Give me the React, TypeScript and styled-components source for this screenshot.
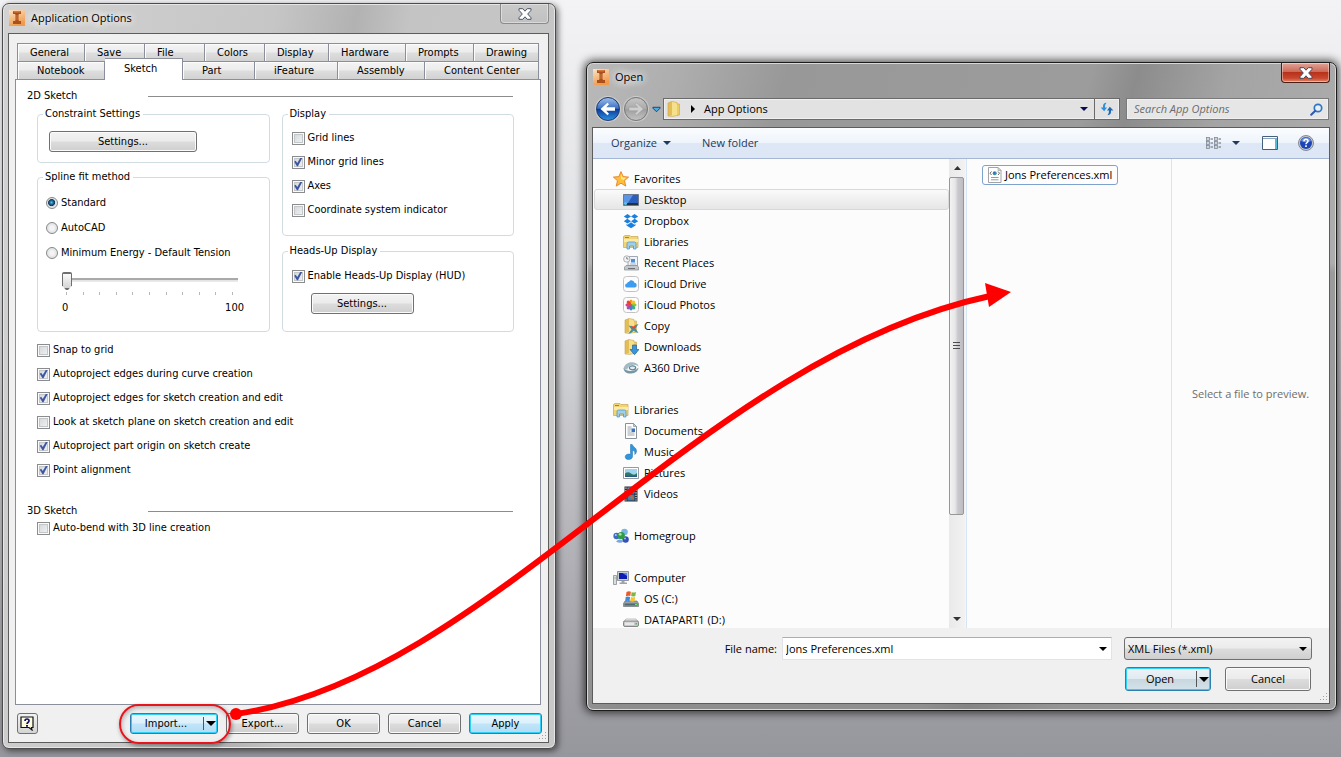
import React, { useState } from "react";
import styled, { createGlobalStyle, css } from "styled-components";

const tahoma = `"DejaVu Sans Condensed", "Liberation Sans", sans-serif`;
const segoe = `"Open Sans", "Noto Sans", sans-serif`;

const GlobalStyle = createGlobalStyle`
  *, *::before, *::after { box-sizing: border-box; }
  body { margin: 0; }
  button, input, select, legend { font: inherit; color: inherit; margin: 0; padding: 0; }
  svg { display: block; flex: none; }
`;

/* ---------- desktop and window frames ---------- */

const Desktop = styled.main`
  position: relative;
  display: grid;
  grid-template-columns: minmax(0, 554fr) minmax(0, 751fr);
  grid-template-rows: minmax(0, 1fr);
  gap: 30px;
  height: 100vh;
  min-height: 720px;
  padding: 3px 4px 8px 2px;
  background: linear-gradient(#f3f3f5 0%, #dcdde0 38%, #a3a3a9 85%, #96969d 100%);
`;

const OptionsWindow = styled.section`
  display: flex;
  flex-direction: column;
  padding: 0 6px 5px 5px;
  border: 1px solid #4c4c4c;
  border-radius: 7px;
  background: linear-gradient(100deg, #d2d2d2 0%, #c6c6c6 40%, #b2b2b2 52%, #c4c4c4 60%, #c8c8c8 100%);
  box-shadow: inset 0 0 0 1px #e6e6e6, 2px 2px 6px rgba(0, 0, 0, 0.55);
  color: #000;
  font: 11px/14px ${tahoma};
`;

const OpenWindow = styled.section`
  display: flex;
  flex-direction: column;
  margin: 59px 0 38px;
  padding: 0 6px 6px 5px;
  border: 1px solid #1c1c1c;
  border-radius: 7px;
  background:
    linear-gradient(transparent 200px, rgba(120, 120, 120, 0.35) 210px),
    linear-gradient(105deg, #b9b9b9 0%, #aeaeae 10%, #989898 22%, #9c9c9c 55%, #8c8c8c 60%, #a4a4a4 70%, #b4b4b4 100%);
  box-shadow: inset 0 0 0 1px #d8d8d8, 0 0 9px 2px rgba(0, 0, 0, 0.65);
  color: #000;
  font: 11px/16px ${segoe};
`;

const TitleBar = styled.header`
  display: flex;
  align-items: flex-start;
  gap: 6px;
  height: 29px;
  padding-left: 1px;
`;

const TitleIcon = styled.span`
  margin-top: 6px;
`;

const Title = styled.h1`
  flex: 1;
  margin: 6px 0 0;
  font: 11px/16px ${segoe};
  text-shadow: 0 0 8px #fff, 0 0 8px #fff, 0 0 12px #fff;
`;

const CloseButton = styled.button<{ $active?: boolean }>`
  display: grid;
  place-items: center;
  width: 49px;
  height: 20px;
  border: 1px solid #8b8b8b;
  border-top: 0;
  border-radius: 0 0 4px 4px;
  background: linear-gradient(#cacaca, #c0c0c0);
  box-shadow: inset 0 0 0 1px rgba(255, 255, 255, 0.4);
  ${(p) =>
    p.$active &&
    css`
      border-color: #4a1d16;
      background: linear-gradient(#e0a598 0%, #cf6a57 45%, #b8311b 50%, #c9482f 80%, #e08a6a 100%);
    `}
`;

const ClientArea = styled.div`
  position: relative;
  display: flex;
  flex: 1;
  flex-direction: column;
  min-height: 0;
  border: 1px solid #5c5c5c;
  background: #f0f0f0;
`;

const SizeGrip = styled.svg`
  position: absolute;
  right: 1px;
  bottom: 1px;
`;

/* ---------- buttons ---------- */

const PushButton = styled.button<{ $width?: number; $highlight?: boolean }>`
  display: flex;
  align-items: center;
  justify-content: center;
  width: ${(p) => p.$width ?? 73}px;
  height: 21px;
  border: 1px solid #707070;
  border-radius: 3px;
  background: linear-gradient(#f3f3f3 0%, #ebebeb 48%, #dcdcdc 52%, #cfcfcf 100%);
  box-shadow: inset 0 0 0 1px #fbfbfb;
  ${(p) =>
    p.$highlight &&
    css`
      border-color: #2c7fae;
      background: linear-gradient(#eaf6fd 0%, #dcf1fc 48%, #c2e5f8 52%, #b0dcf5 100%);
      box-shadow: inset 0 0 0 1px #2fd0f8;
    `}
`;

const SplitButton = styled.div<{ $width: number; $tall?: boolean }>`
  display: flex;
  align-items: stretch;
  width: ${(p) => p.$width}px;
  height: ${(p) => (p.$tall ? 24 : 21)}px;
  border: 1px solid #2c7fae;
  border-radius: 3px;
  background: ${(p) =>
    p.$tall
      ? "linear-gradient(#eef4f8 0%, #e0eaf0 48%, #c8d6df 52%, #d4e2ea 100%)"
      : "linear-gradient(#eaf6fd 0%, #dcf1fc 48%, #c2e5f8 52%, #b0dcf5 100%)"};
  box-shadow: inset 0 0 0 1px #2fd0f8;
`;

const SplitMain = styled.button`
  flex: 1;
  padding-right: 2px;
  border: 0;
  background: none;
`;

const SplitArrow = styled.button`
  display: grid;
  place-items: center;
  width: 14px;
  margin: 3px 0;
  border: 0;
  border-left: 1px solid #555;
  background: none;
`;

/* ---------- tabs ---------- */

const TabStrip = styled.nav`
  padding: 9px 9px 0 8px;
`;

const TabRow = styled.div<{ $columns: string }>`
  display: grid;
  grid-template-columns: ${(p) => p.$columns};
  height: 18px;
  border-left: 1px solid #8b8f9b;
`;

const Tab = styled.button<{ $indent: number; $selected?: boolean }>`
  height: 18px;
  padding: 0 0 0 ${(p) => p.$indent}px;
  border: solid #8b8f9b;
  border-width: 1px 1px 0 0;
  background: linear-gradient(#f4f4f4 0%, #ececec 48%, #dedede 52%, #d2d2d2 100%);
  box-shadow: inset 1px 1px 0 #fcfcfc;
  text-align: left;
  white-space: nowrap;
  ${(p) =>
    p.$selected &&
    css`
      position: relative;
      height: 22px;
      margin: -3px 0 -1px;
      padding-bottom: 2px;
      background: #fff;
      box-shadow: none;
    `}
`;

const TabPage = styled.div`
  flex: 1;
  min-height: 0;
  margin: 0 7px 0 6px;
  padding: 9px 26px 0 11px;
  border: 1px solid #8b8f9b;
  background: #fff;
`;

const SectionTitle = styled.h2`
  display: grid;
  grid-template-columns: 113px 1fr;
  align-items: center;
  gap: 8px;
  margin: 0 1px 0 0;
  font: inherit;
  &::after {
    content: "";
    height: 1px;
    background: #8c8c8c;
  }
`;

/* ---------- group boxes and controls ---------- */

const Columns = styled.div`
  display: grid;
  grid-template-columns: 1fr 1fr;
  gap: 12px;
  margin: 4px 0 0 10px;
`;

const Column = styled.div<{ $gap: number }>`
  display: flex;
  flex-direction: column;
  gap: ${(p) => p.$gap}px;
`;

const Group = styled.fieldset<{ $top: number; $bottom: number; $indent: number; $fill?: boolean }>`
  min-width: 0;
  margin: 0;
  padding: ${(p) => `${p.$top}px ${p.$indent}px ${p.$bottom}px`};
  border: 1px solid #d0dce2;
  border-radius: 4px;
  ${(p) => p.$fill && "flex: 1;"}
  > legend {
    margin-left: ${(p) => 5 - p.$indent}px;
  }
`;

const Legend = styled.legend`
  padding: 0 3px 0 2px;
`;

const Option = styled.label<{ $height?: number }>`
  display: flex;
  align-items: center;
  gap: 3px;
  height: ${(p) => p.$height ?? 24}px;
  white-space: nowrap;
`;

const CheckBox = styled.input.attrs({ type: "checkbox" })`
  appearance: none;
  position: relative;
  flex: none;
  width: 13px;
  height: 13px;
  border: 1px solid #8a8c8e;
  background: linear-gradient(135deg, #cfd2d6, #f6f6f6);
  box-shadow: inset 0 0 0 1px #fafafa, inset 0 0 0 2px #c4c7ca;
  &:checked::after {
    content: "";
    position: absolute;
    inset: 1px;
    background: #3d57a2;
    clip-path: polygon(8% 48%, 24% 36%, 42% 60%, 78% 0, 98% 4%, 50% 98%, 38% 98%);
  }
`;

const Radio = styled.input.attrs({ type: "radio" })`
  appearance: none;
  flex: none;
  width: 12px;
  height: 12px;
  border: 1px solid #85888b;
  border-radius: 50%;
  background: radial-gradient(circle, #f4f4f4 30%, #c6cace 100%);
  box-shadow: inset 0 0 0 1px #e8e8e8;
  &:checked {
    background: radial-gradient(circle at 45% 45%, #5fc0ec 0, #1a6f9f 22%, #0d3554 42%, #d5dade 50%, #f2f2f2 100%);
  }
`;

const SliderBlock = styled.div`
  width: 177px;
  margin: 7px 0 0 15px;
`;

const Slider = styled.input.attrs({ type: "range" })`
  appearance: none;
  display: block;
  width: 100%;
  height: 19px;
  background: none;
  &::-webkit-slider-runnable-track {
    height: 4px;
    margin: 0 0 3px 1px;
    border-top: 2px solid #a8aaaa;
    border-bottom: 1px solid #eaeaea;
    background: #e4e4e4;
  }
  &::-webkit-slider-thumb {
    appearance: none;
    width: 10px;
    height: 18px;
    margin-top: -8px;
    border-radius: 2px;
    background: linear-gradient(#fafafa, #d4d4d4) center / 8px 14px no-repeat, #6c6e70;
    clip-path: polygon(0 0, 100% 0, 100% 75%, 60% 100%, 40% 100%, 0 75%);
  }
`;

const Ticks = styled.div`
  display: flex;
  justify-content: space-between;
  margin: 1px 5px 0;
`;

const Tick = styled.i`
  width: 1px;
  height: 3px;
  background: #b4b8b8;
`;

const SliderScale = styled.div`
  display: flex;
  justify-content: space-between;
  margin: 6px -6px 0 1px;
`;

const OptionList = styled.div`
  display: flex;
  flex-direction: column;
  margin: 6px 0 0 10px;
`;

const HudButton = styled(PushButton)`
  margin: 5px 0 0 19px;
`;

const LowerSection = styled.div`
  margin-top: 22px;
`;

const BendOption = styled.div`
  margin: -2px 0 0 10px;
`;

const Footer = styled.footer`
  display: flex;
  align-items: center;
  gap: 8px;
  height: 37px;
  padding: 0 6px 0 8px;
`;

const HelpButton = styled.button`
  display: grid;
  place-items: center;
  width: 21px;
  height: 21px;
  margin-right: auto;
  border: 1px solid #707070;
  border-radius: 3px;
  background: linear-gradient(#f3f3f3, #d4d4d4);
`;

const ImportHolder = styled.div`
  position: relative;
`;

const Callout = styled.span`
  position: absolute;
  inset: -9px -13px -10px -11px;
  border: 2px solid #e8141c;
  border-radius: 20px;
  box-shadow: 1px 2px 4px rgba(0, 0, 0, 0.4), inset 1px 2px 4px rgba(0, 0, 0, 0.25);
  pointer-events: none;
`;

/* ---------- open dialog ---------- */

const AddressRow = styled.div`
  display: grid;
  grid-template-columns: auto minmax(0, 451fr) minmax(0, 202fr);
  align-items: center;
  gap: 6px;
  height: 35px;
  padding: 0 1px 1px 4px;
`;

const NavButtons = styled.div`
  display: flex;
  align-items: center;
  gap: 4px;
`;

const NavButton = styled.button<{ $forward?: boolean }>`
  display: grid;
  place-items: center;
  width: 24px;
  height: 24px;
  border: 1px solid ${(p) => (p.$forward ? "#777" : "#1a3a72")};
  border-radius: 50%;
  background: ${(p) =>
    p.$forward
      ? "linear-gradient(#c6c6c6, #a9a9a9 50%, #9e9e9e 52%, #c2c2c2)"
      : "linear-gradient(#9dbce8 0%, #3d72c4 46%, #0b3c9c 52%, #2c8fe0 100%)"};
  box-shadow: 0 0 0 1px rgba(255, 255, 255, 0.35);
`;

const PlainButton = styled.button`
  display: grid;
  place-items: center;
  border: 0;
  background: none;
`;

const AddressBar = styled.div`
  display: flex;
  align-items: stretch;
  height: 22px;
  margin-left: -4px;
  border: 1px solid #6a6a6a;
  background: #e2e2e2;
  box-shadow: inset 0 0 0 1px #f0f0f0;
`;

const Crumb = styled.div`
  display: flex;
  flex: 1;
  align-items: center;
  gap: 9px;
  padding-left: 2px;
`;

const AddressButton = styled.button<{ $divided?: boolean }>`
  display: grid;
  place-items: center;
  width: ${(p) => (p.$divided ? 25 : 20)}px;
  border: 0;
  ${(p) => p.$divided && "border-left: 1px solid #6a6a6a;"}
  background: none;
`;

const SearchBox = styled.label`
  display: flex;
  align-items: center;
  height: 22px;
  padding: 0 5px 0 7px;
  border: 1px solid #7a7a7a;
  background: #e6e6e6;
  box-shadow: inset 0 0 0 1px #f0f0f0;
`;

const SearchInput = styled.input`
  flex: 1;
  min-width: 0;
  border: 0;
  background: none;
  font-style: italic;
  &::placeholder {
    color: #6c6c6c;
    opacity: 1;
  }
`;

const CommandBar = styled.div`
  display: flex;
  align-items: center;
  height: 31px;
  padding: 0 15px 0 18px;
  border-bottom: 1px solid #a5b7d4;
  background: linear-gradient(#fbfdff 0%, #eef4fb 48%, #dde7f5 52%, #dce6f4 100%);
  color: #1e395b;
`;

const Command = styled.button<{ $after?: number }>`
  display: flex;
  align-items: center;
  gap: 6px;
  margin-right: ${(p) => p.$after ?? 0}px;
  border: 0;
  background: none;
`;

const ViewCaret = styled.span`
  margin-left: 4px;
`;

const Spacer = styled.span`
  flex: 1;
`;

const Browser = styled.div`
  display: grid;
  flex: 1;
  grid-template-columns: minmax(0, 356fr) 17px minmax(0, 205fr) minmax(0, 158fr);
  grid-template-rows: minmax(0, 1fr);
  min-height: 0;
  background: #fcfcfc;
`;

const Tree = styled.ul`
  margin: 0;
  padding: 9px 0 0 1px;
  overflow: hidden;
  list-style: none;
`;

const TreeItem = styled.li<{ $level: number; $selected?: boolean; $first?: boolean }>`
  display: flex;
  align-items: center;
  gap: 5px;
  height: 21px;
  padding-left: ${(p) => (p.$level ? 28 : 18)}px;
  margin-top: ${(p) => (p.$first ? 21 : 0)}px;
  border: 1px solid transparent;
  border-radius: 3px;
  white-space: nowrap;
  ${(p) =>
    p.$selected &&
    css`
      border-color: #d9d9d9;
      background: linear-gradient(#fafafa, #e6e6e6);
    `}
`;

const ScrollBar = styled.div`
  display: flex;
  flex-direction: column;
  border-right: 1px solid #f6f6f6;
  background: linear-gradient(90deg, #e9e9e9, #f2f2f2);
`;

const ScrollArrow = styled.button`
  display: grid;
  place-items: center;
  height: 18px;
  border: 0;
  background: none;
`;

const ScrollTrack = styled.div`
  flex: 1;
`;

const ScrollThumb = styled.div`
  display: grid;
  place-items: center;
  height: 78%;
  margin: 0 1px 0 0;
  border: 1px solid #979797;
  border-radius: 2px;
  background: linear-gradient(90deg, #f3f3f3 0%, #e6e6e8 40%, #c9c9cd 60%, #bcbcc2 100%);
`;

const FileList = styled.div`
  padding: 6px 0 0 15px;
  border-left: 1px solid #d6e5f5;
`;

const FileItem = styled.button`
  display: flex;
  align-items: center;
  gap: 2px;
  height: 20px;
  padding: 0 5px 0 4px;
  border: 1px solid #7da2ce;
  border-radius: 3px;
  background: #fdfdfd;
  white-space: nowrap;
`;

const Preview = styled.div`
  display: grid;
  place-items: center;
  border-left: 1px solid #d6e5f5;
  color: #6d6d6d;
  white-space: nowrap;
`;

const FileForm = styled.div`
  display: grid;
  grid-template-columns: 1fr 188px;
  gap: 7px 12px;
  padding: 9px 17px 12px 0;
`;

const FileNameField = styled.label`
  display: grid;
  grid-template-columns: 184fr 330fr;
  align-items: center;
  gap: 5px;
  text-align: right;
`;

const Combo = styled.span`
  display: flex;
  height: 23px;
  padding: 0 4px 0 3px;
  border: 1px solid #e2e3ea;
  border-top-color: #abadb3;
  background: #fff;
`;

const ComboInput = styled.input`
  flex: 1;
  min-width: 0;
  border: 0;
  background: none;
`;

const SelectBox = styled.span`
  position: relative;
  display: block;
`;

const Select = styled.select`
  appearance: none;
  width: 100%;
  height: 23px;
  padding-left: 3px;
  border: 1px solid #707070;
  border-radius: 3px;
  background: linear-gradient(#f3f3f3 0%, #ebebeb 48%, #dcdcdc 52%, #cfcfcf 100%);
`;

const SelectCaret = styled.span`
  position: absolute;
  top: 10px;
  right: 5px;
  pointer-events: none;
`;

const Actions = styled.div`
  display: flex;
  grid-column: 2;
  gap: 14px;
  padding-left: 1px;
`;

const CancelButton = styled(PushButton)`
  height: 24px;
`;

const Arrow = styled.svg`
  position: absolute;
  inset: 0;
  width: 100%;
  height: 100%;
  pointer-events: none;
`;

/* ---------- glyphs ---------- */

const Caret = ({ w = 8, color = "#000" }: { w?: number; color?: string }) => (
  <svg width={w} height={w / 2} viewBox="0 0 8 4" aria-hidden="true">
    <path d="M0 0h8L4 4z" fill={color} />
  </svg>
);

const AppIcon = () => (
  <svg width="16" height="16" viewBox="0 0 16 16" aria-hidden="true">
    <defs>
      <linearGradient id="app" x1="0" y1="0" x2="0.4" y2="1">
        <stop offset="0" stopColor="#fbe3c8" />
        <stop offset="1" stopColor="#f09a4a" />
      </linearGradient>
    </defs>
    <path d="M0 0h16v16H0z" fill="url(#app)" />
    <path d="M4 1h8v3h-2l-.5 1v5l.5 1h2v3H4v-3h2l.5-1V5L6 4H4z" fill="#a9501c" />
    <path d="M4 1h8l-1 1.500H5zM7.500 5h1v5h-1z" fill="#d27a3c" />
  </svg>
);

const CloseGlyph = ({ stroke }: { stroke: string }) => (
  <svg width="14" height="12" viewBox="0 0 14 12" aria-hidden="true">
    <path
      d="M1 .7h3.800L7 3.200 9.200.7H13v1.600L9.700 6 13 9.700v1.600H9.200L7 8.800l-2.200 2.500H1V9.700L4.300 6 1 2.300z"
      fill="#fff"
      stroke={stroke}
      strokeWidth="1"
      strokeLinejoin="round"
    />
  </svg>
);

const Grip = () => (
  <SizeGrip width="9" height="9" viewBox="0 0 9 9" aria-hidden="true">
    <path d="M7 0h1v1H7zM4 3h1v1H4zM7 3h1v1H7zM1 6h1v1H1zM4 6h1v1H4zM7 6h1v1H7z" fill="#a2a2a2" />
  </SizeGrip>
);

const Folder = () => (
  <>
    <path d="M2 2l4-1.500v14L2 15z" fill="#e3bd58" />
    <path d="M6 .5l5 1v13l-5 1z" fill="#f6e08c" />
    <path d="M11 3h2.500v11L11 15z" fill="#eccb66" />
    <path d="M2 2l4-1.500 5 1V3h2.500v11L6 15.500 2 15z" fill="none" stroke="#cda548" strokeWidth=".6" />
  </>
);

const glyphs: Record<string, React.ReactNode> = {
  star: (
    <>
      <path d="M8 .6l2.200 5 5.400.5-4.100 3.600 1.300 5.400L8 12.200l-4.800 2.900 1.300-5.400L.4 6.100l5.400-.5z" fill="#fdbf3a" stroke="#e5802a" strokeWidth=".9" />
      <path d="M8 2.800l1.500 3.600 3.500.4-2.700 2.300L8 8z" fill="#ffe88a" />
    </>
  ),
  desktop: (
    <>
      <path d="M.5 2.500h15v11H.5z" fill="#2a5fc0" stroke="#6c7a90" />
      <path d="M1 3h9L5 11H1z" fill="#5c94e6" />
      <path d="M1 11h14v2H1z" fill="#26303c" />
      <circle cx="2.500" cy="11.500" r="1.600" fill="#58c2ec" />
    </>
  ),
  dropbox: (
    <path
      d="M4.500 1L8 3.400 4.300 5.800.8 3.400zM11.500 1l3.700 2.400-3.500 2.400L8 3.400zM.8 8.200l3.500-2.400L8 8.200l-3.500 2.400zM11.700 5.800l3.500 2.400-3.700 2.400L8 8.200zM3.500 11l1.100.7L8 9.300l3.400 2.400 1.100-.7v1.500L8 15.200l-4.500-2.700z"
      fill="#1a7fe0"
    />
  ),
  libraries: (
    <>
      <path d="M.5 2.500L2 1.500h5l1 1h7v11H.5z" fill="#f0d476" stroke="#caa64c" strokeWidth=".7" />
      <path d="M2 3.500h4" stroke="#58a83c" />
      <path d="M1 5h14v3H1z" fill="#faeaa8" />
      <path d="M4 15V9.500Q4 8 5.500 8h6Q13 8 13 9.500V15h-2.500v-3h-4v3z" fill="#9ed0ee" stroke="#4c8fc0" strokeWidth=".7" />
    </>
  ),
  recent: (
    <>
      <path d="M5 1.500h9.500v9.500H5z" fill="#eef4fa" stroke="#8a949e" strokeWidth=".8" />
      <path d="M8 4h4v3.500H8z" fill="#4f8fd4" />
      <path d="M7 9h6" stroke="#9aa6b2" strokeWidth=".8" />
      <path d="M1.500 12l1.500-1.500h11l1.500 1.500v3h-14z" fill="#c3c8cc" stroke="#858a8e" strokeWidth=".7" />
      <path d="M5 13.500h7" stroke="#6a6f73" />
      <circle cx="3.800" cy="4" r="3.200" fill="#f2f4f5" stroke="#9aa0a4" strokeWidth=".8" />
      <path d="M3.800 2v2h1.600" fill="none" stroke="#555" strokeWidth=".7" />
    </>
  ),
  cloud: (
    <>
      <rect x=".5" y=".5" width="15" height="15" rx="3" fill="#fdfdfd" stroke="#c2c2c6" />
      <path d="M4.300 11.500a2 2 0 01-.3-4 2 2 0 012-1.700 3 3 0 015.500 1 2.400 2.400 0 01.5 4.700z" fill="#3d9cf0" />
    </>
  ),
  photos: (
    <>
      <rect x=".5" y=".5" width="15" height="15" rx="3" fill="#fdfdfd" stroke="#c2c2c6" />
      {["#f59a1c", "#f2c81c", "#8cc63c", "#3cb07c", "#4a84d0", "#9058b8", "#d8408c", "#ec4430"].map((c, i) => (
        <ellipse key={c} cx="8" cy="4.900" rx="1.700" ry="2.500" fill={c} transform={`rotate(${i * 45} 8 8)`} />
      ))}
      <circle cx="8" cy="8" r="1" fill="#c83c30" />
    </>
  ),
  copy: (
    <>
      <Folder />
      <path d="M5.500 7.500q3.500 0 5 2.500Q12 6.500 15.500 6l-3 4.500 3 4.500q-3-.5-4.500-2.500Q9 15 5.500 15.500l3-4z" fill="#3f8fa8" />
      <path d="M7.500 7.500l3 1 2.500-2-1.500 4h-2z" fill="#e8492c" />
    </>
  ),
  downloads: (
    <>
      <Folder />
      <path d="M9.500 6h4v4.500H16L11.500 15.700 7 10.500h2.500z" fill="#3a96dc" stroke="#1d69ac" strokeWidth=".7" />
    </>
  ),
  a360: (
    <>
      <path d="M.5 9C1 4.500 5.500 2 9.500 2.300c3.500.2 6 2.200 6 4.500-1-1.300-3-2.200-5.500-2-3 .2-5.500 2.200-5.500 4.700z" fill="#a3b9c3" />
      <path d="M.5 8.500c.5 3.500 3.500 5.500 8 5 4-.4 6.700-2.500 7-6-1.500 1.500-3 2.700-5.500 3.200C6 11.500 3.500 10.500.5 8.500z" fill="#7896a4" />
      <ellipse cx="9.500" cy="7.800" rx="3.200" ry="2" fill="#e4edf1" stroke="#5d8494" strokeWidth="1.200" />
    </>
  ),
  documents: (
    <>
      <path d="M2.500.5h8l3 3v12h-11z" fill="#fff" stroke="#7c8590" strokeWidth=".9" />
      <path d="M10.500.5v3h3z" fill="#ccd4dc" stroke="#7c8590" strokeWidth=".6" />
      <path d="M4.500 4h4M4.500 6h4M4.500 8h3M4.500 10h7M4.500 12h7" stroke="#8a97a6" strokeWidth=".9" />
      <path d="M8.500 5.500H12V9H8.500z" fill="#3a72c0" />
    </>
  ),
  music: (
    <path
      d="M7.500.5h1.700c.5 2.500 4.300 3 4.300 6.500 0 1.500-.7 2.600-1.700 3.500.6-2.500-.8-3.700-2.300-4.200v6.200c0 1.800-1.700 3-3.800 3-2 0-3.500-1-3.500-2.600s1.600-2.800 3.500-2.800c.7 0 1.300.1 1.800.4z"
      fill="#2f97dc"
      stroke="#1c6cae"
      strokeWidth=".5"
    />
  ),
  pictures: (
    <>
      <path d="M.5 2.500h15v11H.5z" fill="#fff" stroke="#8a9096" strokeWidth=".9" />
      <path d="M2 4h12v8H2z" fill="#9fd4f0" />
      <path d="M2 8.500q3-2.500 6 0t6-.5v4H2z" fill="#2f7a62" />
      <path d="M2 10.500h12V12H2z" fill="#2a5a8c" />
    </>
  ),
  videos: (
    <>
      <path d="M1.500.5h13v15h-13z" fill="#2a2e34" />
      <path d="M4.500 1.500h7v6h-7z" fill="#5aa6d4" />
      <path d="M4.500 8.500h7v6h-7z" fill="#3c80b4" />
      <path d="M6 5l4-2v3zM6 12l3-3 2 4z" fill="#c06a38" />
      <path d="M3 1.500v13M13 1.500v13" stroke="#e4e8ea" strokeWidth="1.200" strokeDasharray="1.200 1.200" />
    </>
  ),
  homegroup: (
    <>
      <circle cx="3.600" cy="8" r="3.200" fill="#3c6cc4" />
      <circle cx="11.500" cy="4" r="3.300" fill="#7db4e4" />
      <circle cx="12.600" cy="11.500" r="3.200" fill="#3450b4" />
      <path d="M3 13.500q3.500-4 7.500 0-3.500 2.500-7.500 0z" fill="#7aa4e4" />
      <circle cx="8.200" cy="7.600" r="3.700" fill="#2f9c48" />
      <circle cx="7.200" cy="6.300" r="1.400" fill="#a8e0a8" />
      <circle cx="2.800" cy="6.900" r="1" fill="#b4cef4" />
      <circle cx="12" cy="10.400" r="1" fill="#a4b8f4" />
    </>
  ),
  computer: (
    <>
      <path d="M4.500 1.500h11v9h-11z" fill="#c8ccd0" stroke="#7c8286" strokeWidth=".8" />
      <path d="M6 3h8v6H6z" fill="#0c1cb4" />
      <path d="M9.500 3H14v3z" fill="#5c84f0" />
      <path d="M8.500 11h3v1.500H14V14H6.500v-1.500h2z" fill="#a0a4a8" />
      <path d="M.5 5.500h3v9h-3z" fill="#dadde0" stroke="#8a8e92" strokeWidth=".8" />
      <path d="M1.500 7.500h1v1h-1z" fill="#3cb43c" />
    </>
  ),
  os: (
    <>
      <path d="M2 10h12l1.500 2.500v3H.5v-3z" fill="#9aa0a6" stroke="#5e6468" strokeWidth=".6" />
      <path d="M1.500 12.500h13v2h-13z" fill="#4c6a70" />
      <path d="M12 13h2v1h-2z" fill="#5cf05c" />
      <path d="M3.500 1Q5.700-.2 7.900.8L7.300 5Q5 4.200 2.900 5.200z" fill="#ea5b2c" />
      <path d="M8.700 1q2.200 1 4.300 0L12.300 5q-2.100 1-4.200.1z" fill="#7cb83c" />
      <path d="M2.700 6q2.200-1 4.400 0l-.6 4.200q-2.200-.8-4.300.1z" fill="#3f8ad8" />
      <path d="M7.900 6q2.100.9 4.300 0l-.7 4.200q-2.200.9-4.200 0z" fill="#f8c42c" />
    </>
  ),
  drive: (
    <>
      <path d="M3 7h10l2.500 3H.5z" fill="#f0f0f0" stroke="#9a9a9a" strokeWidth=".6" />
      <rect x=".5" y="9" width="15" height="5.500" rx="1.500" fill="#c8c8c8" stroke="#6e6e6e" strokeWidth=".8" />
      <path d="M2 10.500h9v2.500H2z" fill="#e8e8e8" />
      <path d="M12.500 11h1.500v1.500h-1.500z" fill="#3cc83c" />
    </>
  ),
  folder: <Folder />,
  xml: (
    <>
      <path d="M1.500.5h9.500l3 3v12H1.500z" fill="#fff" stroke="#9a9a9a" strokeWidth=".9" />
      <path d="M11 .5v3h3z" fill="#dcdcdc" stroke="#9a9a9a" strokeWidth=".6" />
      <path d="M4.500 4.500L3 6.200 4.500 8M11 4.500l1.500 1.700L11 8" fill="none" stroke="#555" strokeWidth=".9" />
      <circle cx="7.700" cy="6.200" r="2" fill="#2f9a9c" />
      <circle cx="7.200" cy="5.800" r=".8" fill="#2c5cc4" />
      <path d="M4 10.500h7.500M4 12.800h7.500" stroke="#8c8ca0" strokeWidth=".9" />
    </>
  ),
};

const Glyph = ({ name }: { name: string }) => (
  <svg width="16" height="16" viewBox="0 0 16 16" aria-hidden="true">
    {glyphs[name]}
  </svg>
);

/* ---------- data ---------- */

const tabColumns = (tabs: [string, number][]) => tabs.map(([, size]) => `minmax(0, ${size}fr)`).join(" ");

const firstTabs: [string, number][] = [
  ["General", 67], ["Save", 60], ["File", 60], ["Colors", 60], ["Display", 64], ["Hardware", 77], ["Prompts", 68], ["Drawing", 65],
];
const secondTabs: [string, number][] = [
  ["Notebook", 87], ["Sketch", 78], ["Part", 72], ["iFeature", 83], ["Assembly", 87], ["Content Center", 114],
];
const displayOptions: [string, boolean][] = [
  ["Grid lines", false], ["Minor grid lines", true], ["Axes", true], ["Coordinate system indicator", false],
];
const sketchOptions: [string, boolean][] = [
  ["Snap to grid", false],
  ["Autoproject edges during curve creation", true],
  ["Autoproject edges for sketch creation and edit", true],
  ["Look at sketch plane on sketch creation and edit", false],
  ["Autoproject part origin on sketch create", true],
  ["Point alignment", true],
];
const fitMethods = ["Standard", "AutoCAD", "Minimum Energy - Default Tension"];
const places: { label: string; icon: string; level: number; first?: boolean }[] = [
  { label: "Favorites", icon: "star", level: 0 },
  { label: "Desktop", icon: "desktop", level: 1 },
  { label: "Dropbox", icon: "dropbox", level: 1 },
  { label: "Libraries", icon: "libraries", level: 1 },
  { label: "Recent Places", icon: "recent", level: 1 },
  { label: "iCloud Drive", icon: "cloud", level: 1 },
  { label: "iCloud Photos", icon: "photos", level: 1 },
  { label: "Copy", icon: "copy", level: 1 },
  { label: "Downloads", icon: "downloads", level: 1 },
  { label: "A360 Drive", icon: "a360", level: 1 },
  { label: "Libraries", icon: "libraries", level: 0, first: true },
  { label: "Documents", icon: "documents", level: 1 },
  { label: "Music", icon: "music", level: 1 },
  { label: "Pictures", icon: "pictures", level: 1 },
  { label: "Videos", icon: "videos", level: 1 },
  { label: "Homegroup", icon: "homegroup", level: 0, first: true },
  { label: "Computer", icon: "computer", level: 0, first: true },
  { label: "OS (C:)", icon: "os", level: 1 },
  { label: "DATAPART1 (D:)", icon: "drive", level: 1 },
];

const Check = ({ label, on }: { label: string; on: boolean }) => (
  <Option>
    <CheckBox defaultChecked={on} />
    {label}
  </Option>
);

/* ---------- windows ---------- */

function ApplicationOptions() {
  const [tension, setTension] = useState(0);
  return (
    <OptionsWindow aria-label="Application Options">
      <TitleBar>
        <TitleIcon><AppIcon /></TitleIcon>
        <Title>Application Options</Title>
        <CloseButton aria-label="Close"><CloseGlyph stroke="#4c5468" /></CloseButton>
      </TitleBar>
      <ClientArea>
        <TabStrip>
          <TabRow $columns={tabColumns(firstTabs)}>
            {firstTabs.map(([label]) => (
              <Tab key={label} $indent={12}>{label}</Tab>
            ))}
          </TabRow>
          <TabRow $columns={tabColumns(secondTabs)}>
            {secondTabs.map(([label]) => (
              <Tab key={label} $indent={19} $selected={label === "Sketch"}>{label}</Tab>
            ))}
          </TabRow>
        </TabStrip>
        <TabPage>
          <SectionTitle>2D Sketch</SectionTitle>
          <Columns>
            <Column $gap={7}>
              <Group $top={10} $bottom={10} $indent={11}>
                <Legend>Constraint Settings</Legend>
                <PushButton $width={148}>Settings...</PushButton>
              </Group>
              <Group $top={6} $bottom={0} $indent={8} $fill>
                <Legend>Spline fit method</Legend>
                {fitMethods.map((label, i) => (
                  <Option key={label} $height={25}>
                    <Radio name="fit" defaultChecked={i === 0} />
                    {label}
                  </Option>
                ))}
                <SliderBlock>
                  <Slider aria-label="Tension" min={0} max={100} value={tension} onChange={(e) => setTension(Number(e.target.value))} />
                  <Ticks>{Array.from({ length: 11 }, (_, i) => <Tick key={i} />)}</Ticks>
                  <SliderScale><span>0</span><span>100</span></SliderScale>
                </SliderBlock>
              </Group>
            </Column>
            <Column $gap={8}>
              <Group $top={5} $bottom={13} $indent={9}>
                <Legend>Display</Legend>
                {displayOptions.map(([label, on]) => <Check key={label} label={label} on={on} />)}
              </Group>
              <Group $top={6} $bottom={17} $indent={9} $fill>
                <Legend>Heads-Up Display</Legend>
                <Check label="Enable Heads-Up Display (HUD)" on />
                <HudButton $width={103}>Settings...</HudButton>
              </Group>
            </Column>
          </Columns>
          <OptionList>
            {sketchOptions.map(([label, on]) => <Check key={label} label={label} on={on} />)}
          </OptionList>
          <LowerSection>
            <SectionTitle>3D Sketch</SectionTitle>
            <BendOption><Check label="Auto-bend with 3D line creation" on={false} /></BendOption>
          </LowerSection>
        </TabPage>
        <Footer>
          <HelpButton aria-label="Help">
            <svg width="15" height="15" viewBox="0 0 15 15" aria-hidden="true">
              <path d="M1 1h12v10.500h-1.500L12 14l-3-2.500H1z" fill="#fffde0" stroke="#111" strokeWidth="1.200" />
              <path d="M5 5q0-2 2-2t2 1.800q0 1-1 1.700T7 8" fill="none" stroke="#14146e" strokeWidth="1.700" />
              <path d="M6 9h2v1.700H6z" fill="#14146e" />
            </svg>
          </HelpButton>
          <ImportHolder>
            <SplitButton $width={88}>
              <SplitMain>Import...</SplitMain>
              <SplitArrow aria-label="More import choices"><Caret w={10} /></SplitArrow>
            </SplitButton>
            <Callout />
          </ImportHolder>
          <PushButton>Export...</PushButton>
          <PushButton>OK</PushButton>
          <PushButton>Cancel</PushButton>
          <PushButton $highlight>Apply</PushButton>
        </Footer>
        <Grip />
      </ClientArea>
    </OptionsWindow>
  );
}

function OpenDialog() {
  return (
    <OpenWindow aria-label="Open">
      <TitleBar>
        <TitleIcon><AppIcon /></TitleIcon>
        <Title>Open</Title>
        <CloseButton $active aria-label="Close"><CloseGlyph stroke="#4a4a5c" /></CloseButton>
      </TitleBar>
      <AddressRow>
        <NavButtons>
          <NavButton aria-label="Back">
            <svg width="16" height="14" viewBox="0 0 16 14" aria-hidden="true">
              <path d="M.5 7L7.500.8 9 2.300 6.200 5.300H15v3.400H6.200L9 11.700l-1.500 1.500z" fill="#fff" />
            </svg>
          </NavButton>
          <NavButton $forward aria-label="Forward">
            <svg width="16" height="14" viewBox="0 0 16 14" aria-hidden="true">
              <path d="M15.500 7L8.500.8 7 2.300l2.800 3H1v3.400h8.800L7 11.700l1.500 1.500z" fill="#cfcfcf" stroke="#9a9a9a" strokeWidth=".5" />
            </svg>
          </NavButton>
          <PlainButton aria-label="Recent pages">
            <svg width="9" height="7" viewBox="0 0 10 7" aria-hidden="true">
              <path d="M1 1h8v1L5 6 1 2z" fill="#4fa8e0" stroke="#1c3c60" />
            </svg>
          </PlainButton>
        </NavButtons>
        <AddressBar>
          <Crumb>
            <Glyph name="folder" />
            <svg width="4" height="8" viewBox="0 0 4 8" aria-hidden="true"><path d="M0 0l4 4-4 4z" /></svg>
            <span>App Options</span>
          </Crumb>
          <AddressButton aria-label="Previous locations"><Caret w={8} color="#0a0a50" /></AddressButton>
          <AddressButton $divided aria-label="Refresh">
            <svg width="14" height="14" viewBox="0 0 14 14" aria-hidden="true">
              <path d="M6.500.8Q2.500 1 3 5.500H.6L4.200 9.300 7 5.500H5Q4.700 2.700 6.500.8z" fill="#2f8fdc" />
              <path d="M7.500 13.200q4-.2 3.500-4.700h2.400L9.800 4.700 7 8.500h2q.3 2.800-1.500 4.700z" fill="#1f66b4" />
            </svg>
          </AddressButton>
        </AddressBar>
        <SearchBox>
          <SearchInput aria-label="Search" placeholder="Search App Options" />
          <svg width="13" height="13" viewBox="0 0 13 13" aria-hidden="true">
            <circle cx="8" cy="5" r="3.700" fill="#e6f0f8" stroke="#2f74c4" strokeWidth="1.700" />
            <path d="M5.300 7.700L1.200 11.800" stroke="#2a5cb0" strokeWidth="2" strokeLinecap="round" />
          </svg>
        </SearchBox>
      </AddressRow>
      <ClientArea>
        <CommandBar>
          <Command $after={31}>Organize<Caret w={8} color="#1e395b" /></Command>
          <Command>New folder</Command>
          <Spacer />
          <Command $after={22} aria-label="Change view">
            <svg width="16" height="14" viewBox="0 0 16 14" aria-hidden="true">
              {[0, 8].map((x) =>
                [0, 4, 8].map((y) => (
                  <g key={`${x}-${y}`}>
                    <rect x={x + 0.5} y={y + 1.5} width="3" height="3" fill="#fff" stroke="#7c8694" strokeWidth=".8" />
                    <path d={`M${x + 1.500} ${y + 3}h1`} stroke="#3c4654" />
                    <path d={`M${x + 4.500} ${y + 3}h2.500`} stroke="#5c6674" />
                  </g>
                ))
              )}
            </svg>
            <ViewCaret><Caret w={8} color="#1e395b" /></ViewCaret>
          </Command>
          <Command $after={20} aria-label="Show the preview pane">
            <svg width="16" height="14" viewBox="0 0 16 14" aria-hidden="true">
              <path d="M.5.5h15v13H.5z" fill="#fff" stroke="#44607e" />
              <path d="M1 2.500h14" stroke="#8aa4c0" />
              <path d="M13 3h2v10h-2z" fill="#52bcd0" />
            </svg>
          </Command>
          <Command aria-label="Get help">
            <svg width="16" height="16" viewBox="0 0 16 16" aria-hidden="true">
              <circle cx="8" cy="8" r="7.500" fill="#c4c8d0" stroke="#70747c" strokeWidth=".8" />
              <circle cx="8" cy="8" r="6" fill="#1c44b4" />
              <path d="M3 6a5.300 5.300 0 0110 0q-5 2.500-10 0z" fill="#6c90e0" />
              <path d="M6 6.300q0-2 2-2t2 1.800q0 1-1 1.600T8 9.200" fill="none" stroke="#fff" strokeWidth="1.500" />
              <path d="M7.200 10.300h1.600v1.600H7.200z" fill="#fff" />
            </svg>
          </Command>
        </CommandBar>
        <Browser>
          <Tree>
            {places.map((p) => (
              <TreeItem key={p.label + p.level} $level={p.level} $first={p.first} $selected={p.label === "Desktop"}>
                <Glyph name={p.icon} />
                {p.label}
              </TreeItem>
            ))}
          </Tree>
          <ScrollBar>
            <ScrollArrow aria-label="Scroll up">
              <svg width="7" height="4" viewBox="0 0 7 4" aria-hidden="true"><path d="M0 4h7L3.500 0z" fill="#333" /></svg>
            </ScrollArrow>
            <ScrollTrack>
              <ScrollThumb>
                <svg width="7" height="8" viewBox="0 0 7 8" aria-hidden="true">
                  <path d="M0 .5h7M0 3.500h7M0 6.500h7" stroke="#4c4c4c" />
                </svg>
              </ScrollThumb>
            </ScrollTrack>
            <ScrollArrow aria-label="Scroll down"><Caret w={8} color="#333" /></ScrollArrow>
          </ScrollBar>
          <FileList>
            <FileItem><Glyph name="xml" />Jons Preferences.xml</FileItem>
          </FileList>
          <Preview>Select a file to preview.</Preview>
        </Browser>
        <FileForm>
          <FileNameField>
            File name:
            <Combo>
              <ComboInput defaultValue="Jons Preferences.xml" />
              <PlainButton aria-label="Earlier file names"><Caret w={8} /></PlainButton>
            </Combo>
          </FileNameField>
          <SelectBox>
            <Select aria-label="File type"><option>XML Files (*.xml)</option></Select>
            <SelectCaret><Caret w={8} /></SelectCaret>
          </SelectBox>
          <Actions>
            <SplitButton $width={86} $tall>
              <SplitMain>Open</SplitMain>
              <SplitArrow aria-label="More open choices"><Caret w={10} /></SplitArrow>
            </SplitButton>
            <CancelButton $width={86}>Cancel</CancelButton>
          </Actions>
        </FileForm>
        <Grip />
      </ClientArea>
    </OpenWindow>
  );
}

export default function App() {
  return (
    <>
      <GlobalStyle />
      <Desktop>
        <ApplicationOptions />
        <OpenDialog />
        <Arrow viewBox="0 0 1341 757" preserveAspectRatio="none" aria-hidden="true">
          <circle cx="236" cy="714" r="6" fill="#f00" />
          <path d="M236 714C490 678 700 358 990 296" fill="none" stroke="#f00" strokeWidth="6" />
          <path d="M985 283L1011 292 989 307z" fill="#f00" />
        </Arrow>
      </Desktop>
    </>
  );
}
